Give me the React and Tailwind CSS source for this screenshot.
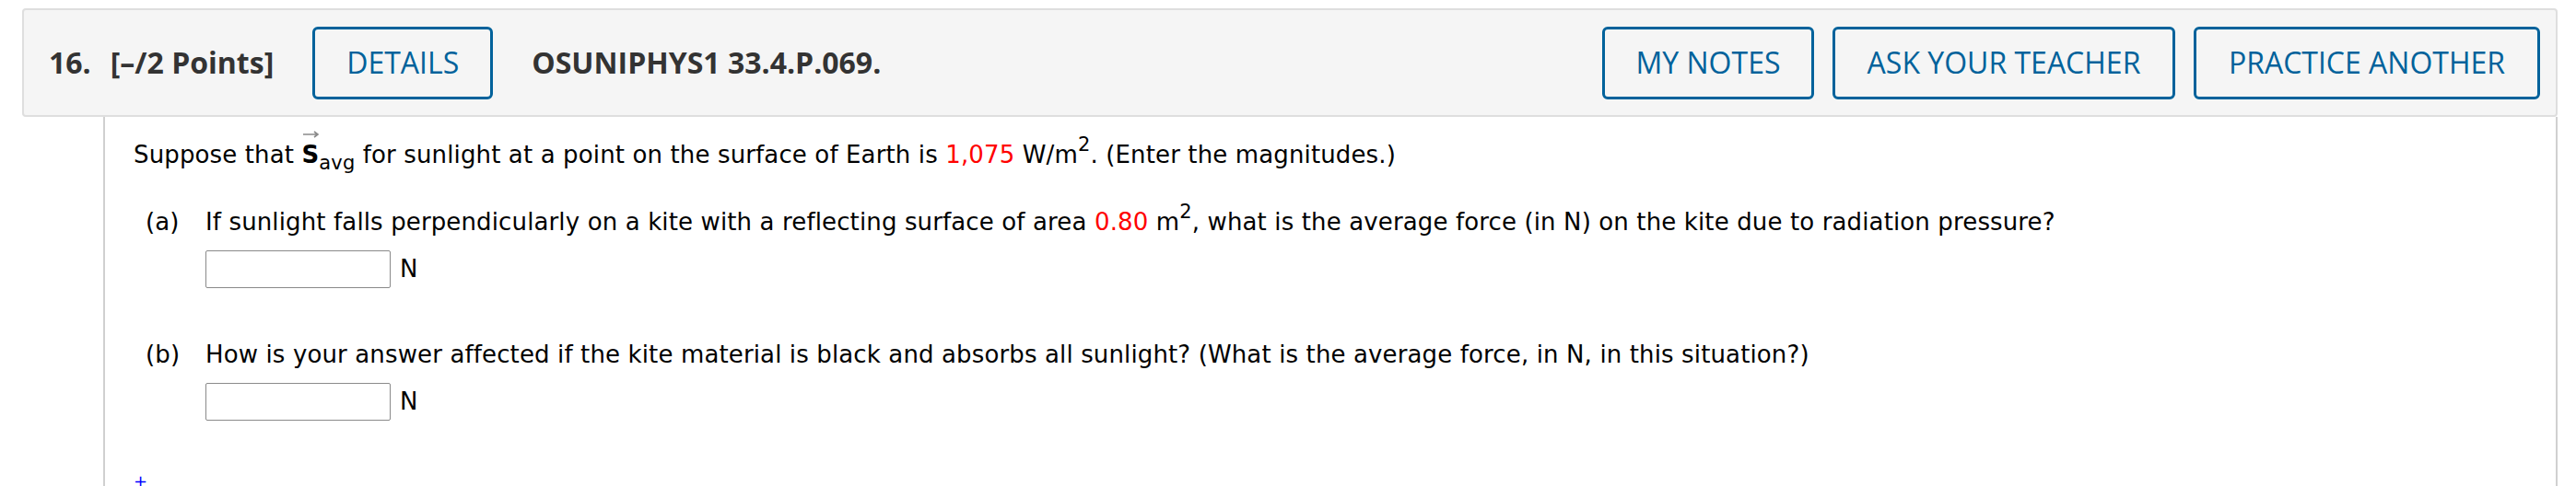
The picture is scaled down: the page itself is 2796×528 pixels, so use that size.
export default function App() {
  const body = { fontFamily: '"DejaVu Sans", Verdana, sans-serif' };
  const head = { fontFamily: '"Open Sans", "Liberation Sans", sans-serif' };

  function Btn({ w, children }) {
    return (
      <button
        className={`h-[79px] ${w} flex items-center justify-center rounded-[6px] border-[3px] border-[#00629b] text-[#00629b] text-[32px] font-medium bg-transparent whitespace-nowrap`}
      >
        {children}
      </button>
    );
  }

  return (
    <div className="w-[2796px] h-[528px] bg-white overflow-hidden">
      <div className="pt-[9px] pl-[24px] pr-[20px]">
        {/* Header bar */}
        <div
          className="h-[118px] flex items-center bg-[#f5f5f5] border-2 border-[#dedede] rounded-[4px] pl-[27px] pr-[17px] text-[32px] text-[#333]"
          style={head}
        >
          <span className="font-bold">16.</span>
          <span className="font-bold ml-[21px]">[–/2 Points]</span>
          <div className="ml-[42px]">
            <Btn w="w-[196px]">DETAILS</Btn>
          </div>
          <span className="font-bold ml-[42px]">OSUNIPHYS1 33.4.P.069.</span>
          <div className="ml-auto flex gap-[20px]">
            <Btn w="w-[230px]">MY NOTES</Btn>
            <Btn w="w-[372px]">ASK YOUR TEACHER</Btn>
            <Btn w="w-[376px]">PRACTICE ANOTHER</Btn>
          </div>
        </div>

        {/* Question body */}
        <div
          className="ml-[88px] h-[420px] border-l-2 border-r-2 border-[#d0d0d0] pl-[31px] pt-[26px] text-[26px] tracking-[0.13px] text-black"
          style={body}
        >
          <p className="leading-[30px] whitespace-nowrap">
            Suppose that{" "}
            <span className="relative inline-block font-bold">
              S
              <svg className="absolute left-[2px] top-[-11px]" width="18" height="8" viewBox="0 0 18 8">
                <path d="M0 4 H16 M12 1 L16 4 L12 7" stroke="#8a8a8a" strokeWidth="1.6" fill="none" />
              </svg>
            </span>
            <span className="relative top-[7px] text-[21px] leading-none">avg</span> for sunlight at a point on
            the surface of Earth is <span className="text-[#f00]">1,075</span> W/m
            <span className="relative top-[-13px] text-[21px] leading-none">2</span>. (Enter the magnitudes.)
          </p>

          <div className="mt-[43px] ml-[13px] flex">
            <span className="w-[65px] shrink-0 leading-[30px]">(a)</span>
            <div>
              <p className="leading-[30px] whitespace-nowrap">
                If sunlight falls perpendicularly on a kite with a reflecting surface of area{" "}
                <span className="text-[#f00]">0.80</span> m
                <span className="relative top-[-13px] text-[21px] leading-none">2</span>, what is the average force
                (in N) on the kite due to radiation pressure?
              </p>
              <div className="mt-[16px] flex items-center">
                <input className="w-[201px] h-[41px] border border-[#8a8a8a] rounded-[2px] bg-white" />
                <span className="ml-[10px]">N</span>
              </div>
            </div>
          </div>

          <div className="mt-[57px] ml-[13px] flex">
            <span className="w-[65px] shrink-0 leading-[30px]">(b)</span>
            <div>
              <p className="leading-[30px] whitespace-nowrap">
                How is your answer affected if the kite material is black and absorbs all sunlight? (What is the
                average force, in N, in this situation?)
              </p>
              <div className="mt-[16px] flex items-center">
                <input className="w-[201px] h-[41px] border border-[#8a8a8a] rounded-[2px] bg-white" />
                <span className="ml-[10px]">N</span>
              </div>
            </div>
          </div>

          <div className="mt-[56px] text-[18px] leading-[20px] text-[#00f]">+</div>
        </div>
      </div>
    </div>
  );
}
